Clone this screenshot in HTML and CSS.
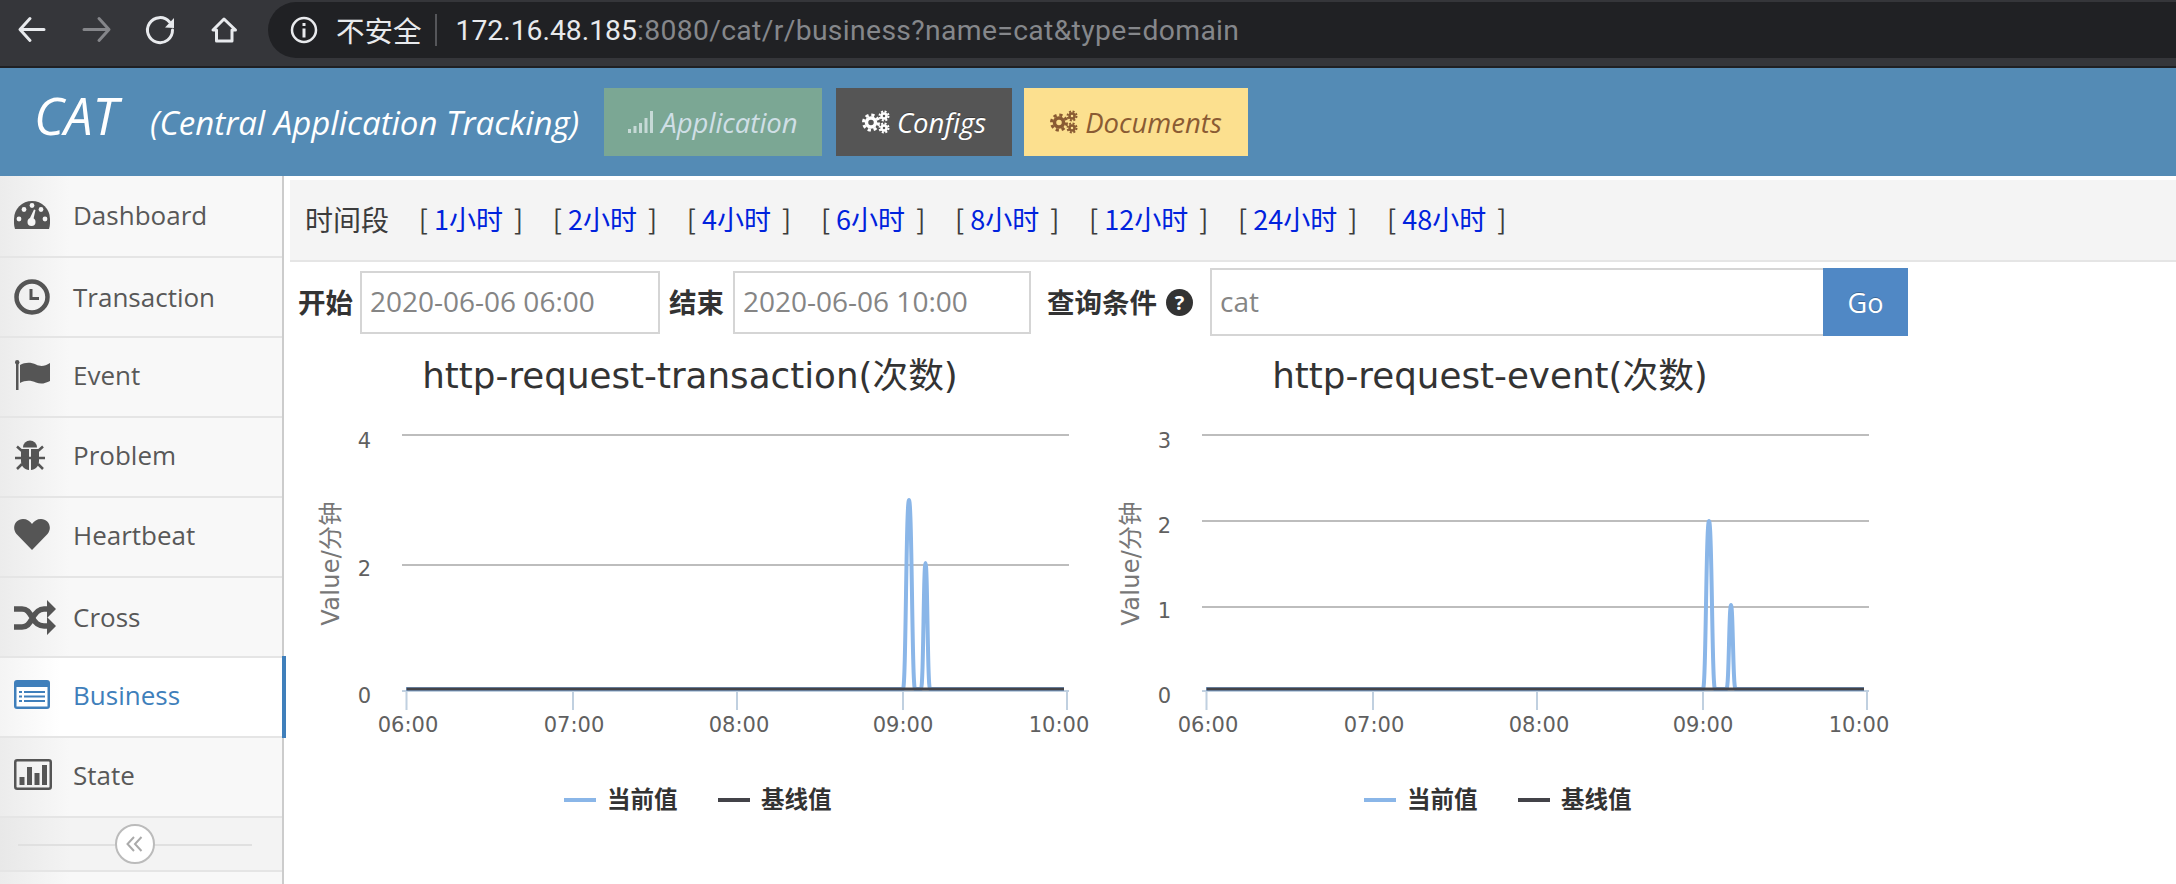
FILE: index.html
```html
<!DOCTYPE html>
<html lang="zh">
<head>
<meta charset="utf-8">
<title>CAT</title>
<link rel="stylesheet" href="styles.css">
</head>
<body>
<div class="chrome">
  <svg class="chrome-icons" width="268" height="60" viewBox="0 0 268 60" fill="none" stroke-linecap="round" stroke-linejoin="round">
    <path class="ci" d="M44 29.5H21M30 18.5 20 29.5l10 11"/>
    <path class="ci off" d="M84 29.5h24M99 18.5l10 11-10 11"/>
    <path class="ci" d="M169.500 22A12.500 12.500 0 1 0 172.500 30"/>
    <path class="cf" d="M165 27.500 174 28V18z"/>
    <path class="ci" d="M224 19 213 30h3.500v11h15.500V30h3.500z"/>
  </svg>
  <div class="omnibox">
    <svg class="info" width="28" height="28" viewBox="0 0 28 28"><circle cx="14" cy="14" r="12" fill="none" stroke="#e8eaed" stroke-width="2.500"/><rect x="12.500" y="12.500" width="3" height="9" fill="#e8eaed"/><rect x="12.500" y="7" width="3" height="3" fill="#e8eaed"/></svg>
    <span class="insecure">不安全</span>
    <span class="omni-sep"></span>
    <span class="url"><span class="host">172.16.48.185</span><span class="path">:8080/cat/r/business?name=cat&amp;type=domain</span></span>
  </div>
</div>
<header class="topbar">
  <div class="brand"><span class="brand-cat">CAT</span><span class="brand-full">(Central Application Tracking)</span></div>
  <a class="tbtn tbtn-app">
    <svg width="26" height="22" viewBox="0 0 26 22"><path d="M0 18h3v4H0zM5.500 15h3v7h-3zM11 12h3v10h-3zM16.500 7h3v15h-3zM22 0h3v22h-3z" fill="#c6d9d6"/></svg>
    <span>Application</span>
  </a>
  <a class="tbtn tbtn-cfg">
    <svg width="28" height="24" viewBox="0 0 28 24" fill="none" stroke="currentColor"><circle cx="9" cy="12.500" r="4.500" stroke-width="3.500"/><circle cx="9" cy="12.500" r="7.500" stroke-width="3" stroke-dasharray="3.200 2.700"/><circle cx="22" cy="6" r="2.500" stroke-width="2.500"/><circle cx="22" cy="6" r="4.500" stroke-width="2" stroke-dasharray="2 1.540"/><circle cx="22" cy="18" r="2.500" stroke-width="2.500"/><circle cx="22" cy="18" r="4.500" stroke-width="2" stroke-dasharray="2 1.540"/></svg>
    <span>Configs</span>
  </a>
  <a class="tbtn tbtn-doc">
    <svg width="28" height="24" viewBox="0 0 28 24" fill="none" stroke="currentColor"><circle cx="9" cy="12.500" r="4.500" stroke-width="3.500"/><circle cx="9" cy="12.500" r="7.500" stroke-width="3" stroke-dasharray="3.200 2.700"/><circle cx="22" cy="6" r="2.500" stroke-width="2.500"/><circle cx="22" cy="6" r="4.500" stroke-width="2" stroke-dasharray="2 1.540"/><circle cx="22" cy="18" r="2.500" stroke-width="2.500"/><circle cx="22" cy="18" r="4.500" stroke-width="2" stroke-dasharray="2 1.540"/></svg>
    <span>Documents</span>
  </a>
</header>
<div class="layout">
  <aside class="sidebar">
    <a class="nav">
      <span class="nav-ic"><svg width="36" height="28" viewBox="0 0 36 28"><path d="M0 18A18 18 0 0 1 36 18v4q0 3-1 6H1q-1-3-1-6z" fill="#555"/><g fill="#f6f6f6"><circle cx="5" cy="18" r="2.400"/><circle cx="10" cy="8.500" r="2.400"/><circle cx="18" cy="4.500" r="2.400"/><circle cx="27" cy="8.500" r="2.400"/><circle cx="31" cy="18" r="2.400"/><circle cx="17.500" cy="21" r="4"/><path d="M15 19 20 8.500 21.500 9l-2.500 11z"/></g></svg></span>
      <span>Dashboard</span>
    </a>
    <a class="nav nudge">
      <span class="nav-ic"><svg width="36" height="36" viewBox="0 0 36 36" fill="none" stroke="#555"><circle cx="18" cy="18" r="15.500" stroke-width="4.500"/><path d="M17 10v9.500h8" stroke-width="3"/></svg></span>
      <span>Transaction</span>
    </a>
    <a class="nav">
      <span class="nav-ic"><svg width="36" height="30" viewBox="0 0 36 30" fill="#555"><rect x="2" y="2" width="2.500" height="28"/><circle cx="3.200" cy="2.200" r="2.200"/><path d="M6 5C11 2 17 2 22 4.500 27 7 31 6 36 3v18c-5 2.500-9 3.500-14 1.500C17 20 11 20 6 23z"/></svg></span>
      <span>Event</span>
    </a>
    <a class="nav">
      <span class="nav-ic"><svg width="32" height="32" viewBox="0 0 32 32" fill="#555"><path d="M9 8.500a7 7 0 0 1 14 0z"/><path d="M7 10h8v21c-4 0-8-3.500-8-9zM17 10h8v12c0 5.500-4 9-8 9z"/><path d="M1 19h30M8 12 3 7.500M24 12l5-4.500M8 25l-5 5M24 25l5 5" stroke="#555" stroke-width="2.500" fill="none"/></svg></span>
      <span>Problem</span>
    </a>
    <a class="nav">
      <span class="nav-ic"><svg width="36" height="31" viewBox="0 0 36 31"><path d="M18 31 2.500 15C-3 8 2 0 9 0c4 0 7 2 9 5 2-3 5-5 9-5 7 0 12 8 6.500 15z" fill="#555"/></svg></span>
      <span>Heartbeat</span>
    </a>
    <a class="nav nudge">
      <span class="nav-ic ic-wide"><svg width="42" height="35" viewBox="0 0 42 35"><path d="M0 9h8c5 0 7 3 10 8 3 6 6 9 12 9h4M0 27h8c5 0 7-3 10-8 3-6 6-10 12-10h4" fill="none" stroke="#555" stroke-width="5.500"/><path d="M33 0l9 9-9 9zM33 17l9 9-9 9z" fill="#555"/></svg></span>
      <span>Cross</span>
    </a>
    <a class="nav nav-active">
      <span class="nav-ic"><svg width="36" height="29" viewBox="0 0 36 29"><rect width="36" height="29" rx="3" fill="#3f7fbb"/><rect x="2.500" y="7" width="31" height="19.500" fill="#fff"/><path d="M10 11h21v2H10zM10 15.500h21v2H10zM10 20h21v2H10zM5 11h3v2H5zM5 15.500h3v2H5zM5 20h3v2H5z" fill="#3f7fbb"/></svg></span>
      <span>Business</span>
    </a>
    <a class="nav">
      <span class="nav-ic"><svg width="38" height="31" viewBox="0 0 38 31" fill="#555"><rect x="1.250" y="1.250" width="35.500" height="28.500" rx="2" fill="none" stroke="#555" stroke-width="2.500"/><rect x="5.500" y="18" width="5" height="8"/><rect x="13" y="8" width="5" height="18"/><rect x="20.500" y="14" width="5" height="12"/><rect x="28" y="6" width="5" height="20"/></svg></span>
      <span>State</span>
    </a>
    <div class="collapse">
      <span class="collapse-btn"><svg width="18" height="16" viewBox="0 0 18 16" fill="none" stroke="#aaa" stroke-width="2"><path d="M8 1 1.500 8 8 15M15.500 1 9 8l6.500 7"/></svg></span>
    </div>
  </aside>
  <main class="main">
    <div class="timebar">
      <span class="tb-label">时间段</span>
      <span class="tb-item">[ <a>1小时</a> ]</span>
      <span class="tb-item">[ <a>2小时</a> ]</span>
      <span class="tb-item">[ <a>4小时</a> ]</span>
      <span class="tb-item">[ <a>6小时</a> ]</span>
      <span class="tb-item">[ <a>8小时</a> ]</span>
      <span class="tb-item">[ <a>12小时</a> ]</span>
      <span class="tb-item">[ <a>24小时</a> ]</span>
      <span class="tb-item">[ <a>48小时</a> ]</span>
    </div>
    <form class="query">
      <label class="q-label">开始</label>
      <input class="q-input q-date" value="2020-06-06 06:00">
      <label class="q-label q-l2">结束</label>
      <input class="q-input q-date q-d2" value="2020-06-06 10:00">
      <label class="q-label q-l3">查询条件</label>
      <span class="q-help">?</span>
      <input class="q-input q-text" value="cat">
      <button type="button" class="q-go">Go</button>
    </form>
    <div class="charts">
      <svg class="chart" width="800" height="544" viewBox="0 0 800 544">
        <text class="c-title" x="400" y="48">http-request-transaction(次数)</text>
        <path class="c-grid" d="M112 95H779M112 225H779"/>
        <path class="c-tick" d="M112 351H779M116.500 351V370M283 351V370M447 351V370M613 351V370M777 351V370"/>
        <path class="c-cur" d="M116 349H613C616 349 616 160 619 160S622 349 625 349H631C633.500 349 633.500 223 635.500 223S637.500 349 640 349H774"/>
        <path class="c-base" d="M116.500 349H774"/>
        <text class="c-yl" x="81" y="108">4</text>
        <text class="c-yl" x="81" y="236">2</text>
        <text class="c-yl" x="81" y="363">0</text>
        <text class="c-xl" x="118" y="392">06:00</text>
        <text class="c-xl" x="284" y="392">07:00</text>
        <text class="c-xl" x="449" y="392">08:00</text>
        <text class="c-xl" x="613" y="392">09:00</text>
        <text class="c-xl" x="769" y="392">10:00</text>
        <text class="c-yt" transform="translate(49 223.500) rotate(-90)">Value/分钟</text>
        <rect class="lg-cur" x="274" y="458" width="32" height="4"/>
        <text class="c-lg" x="317" y="468">当前值</text>
        <rect class="lg-base" x="428" y="458" width="32" height="4"/>
        <text class="c-lg" x="471" y="468">基线值</text>
      </svg>
      <svg class="chart" width="800" height="544" viewBox="0 0 800 544">
        <text class="c-title" x="400" y="48">http-request-event(次数)</text>
        <path class="c-grid" d="M112 95H779M112 181H779M112 267H779"/>
        <path class="c-tick" d="M112 351H779M116.500 351V370M283 351V370M447 351V370M613 351V370M777 351V370"/>
        <path class="c-cur" d="M116 349H613C616 349 616 181 619 181S622 349 625 349H636.500C639 349 639 265 641 265S643 349 645.500 349H774"/>
        <path class="c-base" d="M116.500 349H774"/>
        <text class="c-yl" x="81" y="108">3</text>
        <text class="c-yl" x="81" y="193">2</text>
        <text class="c-yl" x="81" y="278">1</text>
        <text class="c-yl" x="81" y="363">0</text>
        <text class="c-xl" x="118" y="392">06:00</text>
        <text class="c-xl" x="284" y="392">07:00</text>
        <text class="c-xl" x="449" y="392">08:00</text>
        <text class="c-xl" x="613" y="392">09:00</text>
        <text class="c-xl" x="769" y="392">10:00</text>
        <text class="c-yt" transform="translate(49 223.500) rotate(-90)">Value/分钟</text>
        <rect class="lg-cur" x="274" y="458" width="32" height="4"/>
        <text class="c-lg" x="317" y="468">当前值</text>
        <rect class="lg-base" x="428" y="458" width="32" height="4"/>
        <text class="c-lg" x="471" y="468">基线值</text>
      </svg>
    </div>
  </main>
</div>
</body>
</html>
```
FILE: styles.css
```css
* { box-sizing: border-box; }
html, body { margin: 0; height: 884px; overflow: hidden; background: #fff; }
body { font-family: "Open Sans", "Noto Sans CJK SC", sans-serif; color: #393939; }
a { text-decoration: none; }

/* browser chrome */
.chrome { height: 68px; background: #35363a; border-bottom: 2px solid #1f2023; display: flex; padding-top: 2px; }
.chrome-icons { flex: none; margin-top: -2px; width: 268px; }
.ci { stroke: #e8eaed; stroke-width: 3; }
.ci.off { stroke: #85868a; }
.cf { fill: #e8eaed; }
.omnibox { flex: 1; height: 56px; background: #202124; border-radius: 28px 0 0 28px; display: flex; align-items: center; padding-left: 22px; }
.info { flex: none; }
.insecure { font: 28.500px "Noto Sans CJK SC", sans-serif; color: #e8eaed; margin-left: 18px; line-height: 32px; }
.omni-sep { width: 2px; height: 32px; background: #55565a; margin: 0 19px 0 13px; }
.url { font: 28.300px "Roboto", sans-serif; color: #85878b; white-space: nowrap; }
.host { color: #e8eaed; }
.path { letter-spacing: .35px; }

/* header */
.topbar { height: 108px; background: #548bb5; display: flex; align-items: flex-start; padding-top: 20px; }
.brand { width: 604px; flex: none; color: #fff; font-style: italic; padding-left: 34px; display: flex; align-items: baseline; height: 68px; margin-top: -3px; }
.brand-cat { font-size: 51px; line-height: 60px; }
.brand-full { font-size: 33px; margin-left: 32px; }
.tbtn { height: 68px; display: flex; align-items: center; justify-content: center; gap: 7px; font-size: 27.500px; font-style: italic; }
.tbtn-app { width: 218px; background: #7ba794; color: #d0dfe6; margin-right: 14px; }
.tbtn-cfg { width: 176px; background: #555; color: #fff; margin-right: 12px; text-shadow: 0 -1px 0 rgba(0,0,0,.3); }
.tbtn-doc { width: 224px; background: #fce08f; color: #8a5b33; }

/* layout */
.layout { display: flex; height: 708px; }
.sidebar { width: 284px; flex: none; border-right: 2px solid #ccc; background: linear-gradient(to right, #ececec 0, #f8f8f8 70px); display: flex; flex-direction: column; padding-top: 2px; }
.nav { height: 80px; flex: none; border-bottom: 2px solid #e5e5e5; display: flex; align-items: center; font-size: 26px; color: #585858; padding-bottom: 5px; }
.nav.nudge { padding-bottom: 0; }
.nav-ic { width: 73px; padding-left: 14px; flex: none; display: flex; }
.nav-active { position: relative; background: linear-gradient(to right, #f4f4f4 0, #fff 60px); color: #3f7fbb; }
.nav-active::after { content: ""; position: absolute; right: -4px; top: -2px; bottom: -2px; width: 4px; background: #3f7fbb; }
.collapse { height: 54px; border-bottom: 2px solid #e5e5e5; background: linear-gradient(to right, #e8e8e8 0, #f3f3f3 70px); position: relative; display: flex; justify-content: center; align-items: center; flex: none; }
.collapse::before { content: ""; position: absolute; left: 18px; right: 30px; top: 26px; height: 2px; background: #e0e0e0; }
.collapse-btn { position: relative; width: 40px; height: 40px; border: 2px solid #bbb; border-radius: 50%; background: #fff; display: flex; align-items: center; justify-content: center; margin-right: 12px; }

/* main */
.main { flex: 1; padding: 4px 0 0 6px; min-width: 0; }
.timebar { height: 82px; background: #f4f4f4; border-bottom: 2px solid #e5e5e5; display: flex; align-items: center; gap: 29.700px; padding: 0 0 3px 15px; font: 27px "Noto Sans CJK SC", sans-serif; color: #3c3c3c; }
.tb-label { font-size: 28px; flex: none; }
.tb-item { white-space: pre; flex: none; }
.tb-item a { color: #0022dd; padding-right: 5px; }
.query { display: flex; align-items: center; height: 68px; margin-top: 6px; padding-left: 8px; }
.q-label { font: 700 27.500px "Noto Sans CJK SC", sans-serif; color: #333; margin-right: 7px; padding-bottom: 2px; }
.q-l2 { margin-left: 9px; margin-right: 9px; }
.q-l3 { margin-left: 16px; margin-right: 9px; }
.q-help { width: 27px; height: 27px; border-radius: 50%; background: #333; color: #fff; font: 700 20px/27px "Open Sans", sans-serif; text-align: center; margin-right: 17px; flex: none; }
.q-input { border: 2px solid #d5d5d5; background: #fff; color: #858585; font: 28px "Open Sans", sans-serif; padding: 0 8px 2px; outline: none; flex: none; }
.q-date { width: 300px; height: 63px; }
.q-d2 { width: 298px; }
.q-text { width: 613px; height: 68px; border-right: 0; }
.q-go { width: 85px; height: 68px; background: #5088c5; border: 0; color: #fff; font: 27px "Open Sans", sans-serif; text-shadow: 0 -1px 0 rgba(0,0,0,.25); padding: 0; flex: none; }
.charts { display: flex; margin-top: 4px; }
.chart { flex: none; display: block; }
.c-title { font: 35.700px "DejaVu Sans", "Noto Sans CJK SC", sans-serif; fill: #333; text-anchor: middle; }
.c-grid { stroke: #bdbdbd; stroke-width: 2; fill: none; }
.c-tick { stroke: #c0d0e0; stroke-width: 2; fill: none; }
.c-cur { stroke: #8ab6e8; stroke-width: 4; fill: none; }
.c-base { stroke: #434348; stroke-width: 3; fill: none; }
.c-yl, .c-xl { font: 21px "DejaVu Sans", sans-serif; fill: #606060; }
.c-yl { text-anchor: end; }
.c-xl { text-anchor: middle; }
.c-yt { font: 24px "DejaVu Sans", "Noto Sans CJK SC", sans-serif; letter-spacing: .3px; fill: #777; text-anchor: middle; }
.c-lg { font: 700 23.500px "Noto Sans CJK SC", sans-serif; fill: #333; }
.lg-cur { fill: #8ab6e8; }
.lg-base { fill: #434348; }
```
